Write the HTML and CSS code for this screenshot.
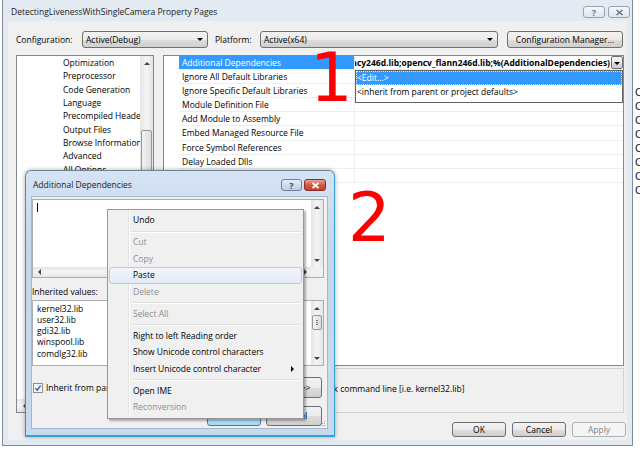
FILE: index.html
```html
<!DOCTYPE html>
<html lang="en">
<head>
    <meta charset="UTF-8">
    <title>DetectingLivenessWithSingleCamera Property Pages</title>
    <link rel="stylesheet" href="styles.css">
</head>
<body>
<div class="desk">
    <div class="behind">C<br>C<br>C<br>C<br>C<br>C<br>C<br>C</div>

    <div class="win">
        <div class="titlebar">
            <span class="wtitle">DetectingLivenessWithSingleCamera Property Pages</span>
            <span class="cap">?</span>
            <span class="cap"><svg width="9" height="7" viewBox="0 0 9 7"><path d="M1.5 1L7.5 6M7.5 1L1.5 6" stroke="#6b7684" stroke-width="1.6"/></svg></span>
        </div>
        <div class="client">
            <div class="configrow">
                <span class="lbl cfg-lbl">Configuration:</span>
                <div class="combo cfg">Active(Debug)<i class="tri-d"></i></div>
                <span class="lbl plat-lbl">Platform:</span>
                <div class="combo plat">Active(x64)<i class="tri-d"></i></div>
                <div class="btn mgr">Configuration Manager...</div>
            </div>

            <div class="panes">
                <div class="tree">
                    <div class="tree-main">
                        <div class="tree-items">
                            <div>Optimization</div>
                            <div>Preprocessor</div>
                            <div>Code Generation</div>
                            <div>Language</div>
                            <div>Precompiled Headers</div>
                            <div>Output Files</div>
                            <div>Browse Information</div>
                            <div>Advanced</div>
                            <div>All Options</div>
                            <div>Command Line</div>
                        </div>
                        <div class="sv tree-sv">
                            <div class="sbb"><i class="tu"></i></div>
                            <div class="sbtrack"><div class="thumb tree-thumb"></div></div>
                        </div>
                    </div>
                    <div class="sh">
                        <div class="sbb"><i class="tl"></i></div>
                    </div>
                </div>

                <div class="rightcol">
                    <div class="grid">
                        <div class="row sel">
                            <div class="name">Additional Dependencies</div>
                            <div class="val">
                                <span class="clip"><b>opencv_legacy246d.lib;opencv_flann246d.lib;%(AdditionalDependencies)</b></span>
                                <span class="dropbtn"><i class="tri-d"></i></span>
                            </div>
                        </div>
                        <div class="row"><div class="name">Ignore All Default Libraries</div><div class="val"></div></div>
                        <div class="row"><div class="name">Ignore Specific Default Libraries</div><div class="val"></div></div>
                        <div class="row"><div class="name">Module Definition File</div><div class="val"></div></div>
                        <div class="row"><div class="name">Add Module to Assembly</div><div class="val"></div></div>
                        <div class="row"><div class="name">Embed Managed Resource File</div><div class="val"></div></div>
                        <div class="row"><div class="name">Force Symbol References</div><div class="val"></div></div>
                        <div class="row"><div class="name">Delay Loaded Dlls</div><div class="val"></div></div>
                        <div class="row"><div class="name">Assembly Link Resource</div><div class="val"></div></div>

                        <div class="droplist">
                            <div class="dl-item sel">&lt;Edit...&gt;</div>
                            <div class="dl-item">&lt;inherit from parent or project defaults&gt;</div>
                        </div>
                    </div>
                    <div class="desc">
                        <b>Additional Dependencies</b><br>
                        Specifies additional items to add to the link command line [i.e. kernel32.lib]
                    </div>
                </div>
            </div>

            <div class="buttons">
                <div class="btn">OK</div>
                <div class="btn">Cancel</div>
                <div class="btn off">Apply</div>
            </div>
        </div>
    </div>

    <div class="mark one">1</div>
    <div class="mark two">2</div>

    <div class="dlg">
        <div class="dtitle">
            <span class="dtext">Additional Dependencies</span>
            <span class="dcap help">?</span>
            <span class="dcap close"><svg width="9" height="7" viewBox="0 0 9 7"><path d="M1.5 1L7.5 6M7.5 1L1.5 6" stroke="#fff" stroke-width="1.8"/></svg></span>
        </div>
        <div class="dclient">
            <div class="editbox">
                <div class="etext"><i class="caret"></i></div>
                <div class="sv">
                    <div class="sbb"><i class="tu"></i></div>
                    <div class="sbtrack"></div>
                    <div class="sbb"><i class="td"></i></div>
                </div>
                <div class="sh">
                    <div class="sbb"><i class="tl"></i></div>
                    <div class="sbtrack"></div>
                    <div class="sbb"><i class="tr"></i></div>
                </div>
                <div class="corner"></div>
            </div>

            <div class="dlabel">Inherited values:</div>
            <div class="inh">
                <div class="inh-items">
                    <div>kernel32.lib</div>
                    <div>user32.lib</div>
                    <div>gdi32.lib</div>
                    <div>winspool.lib</div>
                    <div>comdlg32.lib</div>
                </div>
                <div class="sv">
                    <div class="sbb"><i class="tu"></i></div>
                    <div class="sbtrack"><div class="thumb grip"></div></div>
                    <div class="sbb"><i class="td"></i></div>
                </div>
            </div>

            <div class="checkrow">
                <span class="chk"><svg width="10" height="10" viewBox="0 0 10 10"><rect x=".5" y=".5" width="9" height="9" fill="#f4f4f4" stroke="#8e8f8f"/><path d="M2.4 5.2L4.3 7.2L7.6 2.6" stroke="#2a5ea8" stroke-width="1.4" fill="none"/></svg></span>
                <span class="chk-text">Inherit from parent or project defaults</span>
                <div class="btn macros">Macros&gt;&gt;</div>
            </div>

            <div class="dbuttons">
                <div class="btn def">OK</div>
                <div class="btn dcancel">Cancel</div>
            </div>
            <svg class="gripper" width="7" height="7" viewBox="0 0 7 7"><g fill="#a0a0a0"><rect x="5" y="1" width="1" height="1"/><rect x="3" y="3" width="1" height="1"/><rect x="5" y="3" width="1" height="1"/><rect x="1" y="5" width="1" height="1"/><rect x="3" y="5" width="1" height="1"/><rect x="5" y="5" width="1" height="1"/></g></svg>
        </div>
    </div>

    <div class="menu">
        <div class="mi">Undo</div>
        <div class="msep"></div>
        <div class="mi off">Cut</div>
        <div class="mi off">Copy</div>
        <div class="mi hot">Paste</div>
        <div class="mi off">Delete</div>
        <div class="msep"></div>
        <div class="mi off">Select All</div>
        <div class="msep"></div>
        <div class="mi">Right to left Reading order</div>
        <div class="mi">Show Unicode control characters</div>
        <div class="mi">Insert Unicode control character<i class="sub"></i></div>
        <div class="msep"></div>
        <div class="mi">Open IME</div>
        <div class="mi off">Reconversion</div>
    </div>
</div>
</body>
</html>
```

FILE: styles.css
```css
*{
    box-sizing: border-box;
}
body{
    margin: 0;
    background: #fff;
    font-family: "Open Sans", "Noto Sans", sans-serif;
    font-size: 8.5px;
    color: #000;
}
.desk{
    position: relative;
    width: 640px;
    height: 453px;
    overflow: hidden;
    background: #fff;
}
.behind{
    position: absolute;
    left: 635px;
    top: 86px;
    font-family: "DejaVu Sans", sans-serif;
    font-size: 10px;
    line-height: 14px;
    color: #1a1a1a;
}

/* main property pages window */
.win{
    position: absolute;
    left: 2px;
    top: 0;
    width: 631px;
    height: 446px;
    display: flex;
    flex-direction: column;
    padding: 0 5px 5px;
    background: #e3eaf2;
    border: 1px solid #7d8a99;
    border-top: 0;
}
.titlebar{
    height: 21px;
    margin: 0 -5px;
    padding: 6px 2px 0 8px;
    display: flex;
    align-items: flex-start;
    gap: 3px;
}
.wtitle{
    flex: 1;
    line-height: 12px;
    color: #222;
}
.cap{
    width: 22px;
    height: 12px;
    border: 1px solid #97a3b0;
    border-radius: 3px;
    background: linear-gradient(#f6f8fa, #dfe5ec);
    display: flex;
    align-items: center;
    justify-content: center;
    color: #6b7684;
    font-weight: bold;
    font-size: 9px;
}
.client{
    flex: 1;
    background: #f0f0f0;
    padding: 10px 3px 0 8px;
    display: flex;
    flex-direction: column;
}
.configrow{
    height: 17px;
    display: flex;
    align-items: center;
}
.lbl{
    line-height: 17px;
}
.cfg-lbl{
    width: 66px;
}
.plat-lbl{
    width: 45px;
    margin-left: 7px;
}
.combo, .btn{
    height: 17px;
    line-height: 15px;
    border: 1px solid #707070;
    border-radius: 3px;
    background: linear-gradient(#f2f2f2, #ebebeb 50%, #dddddd 51%, #cfcfcf);
}
.combo{
    position: relative;
    padding: 0 16px 0 3px;
}
.cfg{
    width: 126px;
}
.plat{
    width: 238px;
}
.tri-d{
    position: absolute;
    right: 4px;
    top: 6px;
    border-left: 3px solid transparent;
    border-right: 3px solid transparent;
    border-top: 3px solid #000;
}
.btn{
    text-align: center;
}
.mgr{
    width: 116px;
    margin-left: 9px;
}

/* tree + grid */
.panes{
    margin-top: 7px;
    height: 358px;
    display: flex;
    gap: 9px;
}
.tree{
    width: 138px;
    border: 1px solid #828790;
    background: #fff;
    display: flex;
    flex-direction: column;
}
.tree-main{
    flex: 1;
    display: flex;
    min-height: 0;
}
.tree-items{
    flex: 1;
    padding-left: 46px;
    line-height: 13.33px;
    overflow: hidden;
    white-space: nowrap;
}
.sv{
    display: flex;
    flex-direction: column;
    background: linear-gradient(to right, #e4e4e4, #f5f5f5 50%, #e4e4e4);
}
.tree-sv{
    width: 13px;
}
.sh{
    height: 13px;
    display: flex;
    background: linear-gradient(#e4e4e4, #f5f5f5 50%, #e4e4e4);
}
.sbb{
    height: 14px;
    display: flex;
    align-items: center;
    justify-content: center;
}
.sh .sbb{
    width: 14px;
    height: auto;
}
.sbtrack{
    flex: 1;
}
.thumb{
    margin: 0 1px;
    border: 1px solid #979797;
    border-radius: 2px;
    background: linear-gradient(to right, #f3f3f3, #dcdcdc);
}
.tree-thumb{
    margin-top: 60px;
    height: 160px;
}
.grip{
    height: 15px;
    position: relative;
}
.grip::after{
    content: "";
    position: absolute;
    left: 3px;
    right: 3px;
    top: 4px;
    height: 5px;
    background: repeating-linear-gradient(#7c7c7c 0 1px, transparent 1px 2px);
}
.tu, .td, .tl, .tr{
    width: 0;
    height: 0;
}
.tu{
    border-left: 3px solid transparent;
    border-right: 3px solid transparent;
    border-bottom: 3px solid #444;
}
.td{
    border-left: 3px solid transparent;
    border-right: 3px solid transparent;
    border-top: 3px solid #444;
}
.tl{
    border-top: 3px solid transparent;
    border-bottom: 3px solid transparent;
    border-right: 3px solid #444;
}
.tr{
    border-top: 3px solid transparent;
    border-bottom: 3px solid transparent;
    border-left: 3px solid #444;
}

.rightcol{
    flex: 1;
    min-width: 0;
    display: flex;
    flex-direction: column;
    gap: 2px;
}
.grid{
    height: 311px;
    border: 1px solid #828790;
    background: #fff;
    position: relative;
}
.row{
    height: 14.1px;
    margin-left: 15px;
    display: flex;
    border-bottom: 1px solid #eeeeee;
    line-height: 13px;
}
.name{
    width: 176px;
    flex-shrink: 0;
    padding-left: 3px;
    border-right: 1px solid #eeeeee;
    white-space: nowrap;
    overflow: hidden;
}
.val{
    flex: 1;
    display: flex;
    min-width: 0;
}
.row.sel .name{
    background: #3399ff;
    color: #fff;
}
.clip{
    flex: 1;
    min-width: 0;
    display: flex;
    justify-content: flex-end;
    overflow: hidden;
    white-space: nowrap;
    padding-right: 1px;
}
.clip b{
    flex-shrink: 0;
}
.dropbtn{
    width: 12px;
    flex-shrink: 0;
    position: relative;
    border: 1px solid #707070;
    border-radius: 2px;
    background: linear-gradient(#f2f2f2, #ebebeb 50%, #dddddd 51%, #cfcfcf);
}
.dropbtn .tri-d{
    right: 2px;
    top: 5px;
}
.droplist{
    position: absolute;
    left: 191px;
    top: 14px;
    width: 268px;
    height: 33px;
    border: 1px solid #646464;
    background: #fff;
}
.dl-item{
    height: 14px;
    line-height: 12px;
    border: 1px dotted transparent;
    white-space: nowrap;
}
.dl-item.sel{
    background: #3399ff;
    color: #fff;
    border-color: #cfe6ff;
}
.desc{
    flex: 1;
    border: 1px solid #cdd3d9;
    padding: 2px 4px;
    line-height: 12px;
    white-space: nowrap;
    overflow: hidden;
}
.buttons{
    margin-top: 9px;
    margin-right: -2px;
    display: flex;
    justify-content: flex-end;
    gap: 6px;
}
.buttons .btn{
    width: 54px;
    height: 15px;
    line-height: 13px;
}
.btn.off{
    border-color: #adb2b5;
    color: #838383;
    background: #f4f4f4;
}

/* red annotations */
.mark{
    position: absolute;
    font-family: "DejaVu Sans", sans-serif;
    font-size: 67px;
    line-height: 67px;
    color: #ff0000;
}
.one{
    left: 310px;
    top: 45px;
}
.two{
    left: 348px;
    top: 185px;
}

/* Additional Dependencies dialog */
.dlg{
    position: absolute;
    left: 25px;
    top: 170px;
    width: 310px;
    height: 267px;
    display: flex;
    flex-direction: column;
    padding: 0 6px 6px 5px;
    border: 1px solid #6f8194;
    border-right-color: #34a3cf;
    border-bottom: 2px solid #34a3cf;
    border-radius: 6px 6px 0 0;
    background: linear-gradient(#d5e3f3, #c3d6ec 30%, #c8daee);
    box-shadow: 0 0 4px rgba(0, 0, 0, 0.35);
}
.dtitle{
    height: 25px;
    display: flex;
    align-items: flex-start;
    padding: 8px 2px 0 2px;
    gap: 2px;
}
.dtext{
    flex: 1;
    line-height: 12px;
    color: #1b1b1b;
}
.dcap{
    height: 12px;
    border-radius: 3px;
    display: flex;
    align-items: center;
    justify-content: center;
}
.help{
    width: 21px;
    border: 1px solid #6d829e;
    background: linear-gradient(#e3ecf7, #bccfe6);
    color: #3d4b5e;
    font-weight: bold;
    font-size: 9px;
}
.close{
    width: 22px;
    border: 1px solid #8a2e25;
    background: linear-gradient(#e8a493, #cf5c45 50%, #c2422b);
}
.dclient{
    flex: 1;
    position: relative;
    background: #f0f0f0;
    border: 1px solid #a5b7cb;
    padding: 2px 3px 0 0;
    display: flex;
    flex-direction: column;
}
.editbox{
    height: 79px;
    border: 1px solid #abadb3;
    background: #fff;
    display: grid;
    grid-template-columns: 1fr 12px;
    grid-template-rows: 1fr 10px;
}
.editbox .sh{
    height: auto;
}
.editbox .sh .sbb{
    width: 12px;
}
.etext{
    padding: 3px 4px;
}
.caret{
    display: block;
    width: 1px;
    height: 9px;
    background: #000;
}
.corner{
    background: #f0f0f0;
}
.dlabel{
    margin-top: 8px;
    line-height: 12px;
}
.inh{
    margin-top: 2px;
    height: 66px;
    border: 1px solid #abadb3;
    background: #fff;
    display: flex;
}
.inh-items{
    flex: 1;
    padding: 1.5px 4px;
    line-height: 11.3px;
}
.inh .sv{
    width: 12px;
}
.checkrow{
    margin-top: 11px;
    height: 21px;
    display: flex;
    align-items: center;
}
.chk{
    display: flex;
    margin-left: 1px;
}
.chk-text{
    margin-left: 3px;
    white-space: nowrap;
}
.macros{
    margin-left: auto;
    margin-right: 2px;
    width: 62px;
    height: 21px;
    line-height: 19px;
}
.dbuttons{
    margin-top: 8px;
    margin-right: 2px;
    display: flex;
    justify-content: flex-end;
    gap: 5px;
}
.dbuttons .btn{
    height: 20px;
    line-height: 18px;
    width: 56px;
}
.dbuttons .def{
    width: 54px;
    border-color: #3c7fb1;
    background: linear-gradient(#eaf6fd, #d9f0fc 50%, #bee6fd 51%, #a7d9f5);
}
.gripper{
    position: absolute;
    right: 1px;
    bottom: 1px;
}

/* context menu */
.menu{
    position: absolute;
    left: 107px;
    top: 209px;
    width: 197px;
    padding: 2px;
    border: 1px solid #979797;
    background: linear-gradient(to right, transparent 20px, #e2e3e3 20px, #e2e3e3 21px, #fff 21px, #fff 22px, transparent 22px), #f0f0f0;
    box-shadow: 2px 2px 2px rgba(0, 0, 0, 0.3);
}
.mi{
    position: relative;
    height: 16.5px;
    line-height: 16.5px;
    padding-left: 23px;
    white-space: nowrap;
}
.mi.off{
    color: #8d8d8d;
}
.mi.hot{
    margin: 0 -1px;
    line-height: 14.5px;
    border: 1px solid #b4cbe6;
    border-radius: 3px;
    background: linear-gradient(#f2f6fb, #e3ebf6);
}
.sub{
    position: absolute;
    right: 7px;
    top: 5px;
    border-top: 3px solid transparent;
    border-bottom: 3px solid transparent;
    border-left: 3px solid #000;
}
.msep{
    height: 5.5px;
    margin-left: 21px;
    background: linear-gradient(#e0e0e0, #e0e0e0) 0 2px / 100% 1px no-repeat, linear-gradient(#fff, #fff) 0 3px / 100% 1px no-repeat;
}
```
